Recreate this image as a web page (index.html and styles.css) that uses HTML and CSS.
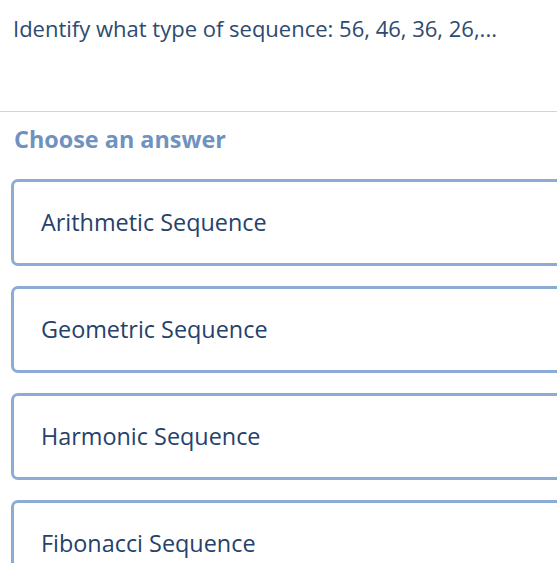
FILE: index.html
```html
<!DOCTYPE html>
<html>
<head>
<meta charset="utf-8">
<link rel="stylesheet" href="styles.css">
</head>
<body>
<div class="page">
  <div class="question">Identify what type of sequence: 56, 46, 36, 26,...</div>
  <div class="divider"></div>
  <div class="prompt">Choose an answer</div>
  <div class="answers">
    <div class="answer">Arithmetic Sequence</div>
    <div class="answer">Geometric Sequence</div>
    <div class="answer">Harmonic Sequence</div>
    <div class="answer">Fibonacci Sequence</div>
  </div>
</div>
</body>
</html>
```
FILE: styles.css
```css
html, body {
  margin: 0;
  padding: 0;
  background: #ffffff;
}
.page {
  width: 557px;
  height: 563px;
  overflow: hidden;
  font-family: "Open Sans", "Noto Sans", sans-serif;
}
.question {
  padding: 13px 0 0 13px;
  font-size: 22px;
  line-height: 30px;
  color: #2e4a6f;
  height: 98px;
  box-sizing: border-box;
  white-space: nowrap;
}
.divider {
  height: 1px;
  background: #d3d3d3;
  margin-top: 13px;
}
.prompt {
  margin-top: 12px;
  padding-left: 14px;
  font-size: 23.4px;
  line-height: 30px;
  font-weight: 700;
  color: #6f92c0;
}
.answers {
  margin-top: 25px;
  display: flex;
  flex-direction: column;
  gap: 20px;
  padding-left: 11px;
}
.answer {
  width: 600px;
  height: 87px;
  box-sizing: border-box;
  border: 3px solid #8cabd5;
  border-radius: 7px;
  padding: 25px 0 0 27px;
  font-size: 23.4px;
  line-height: 30px;
  color: #26416a;
}
```
